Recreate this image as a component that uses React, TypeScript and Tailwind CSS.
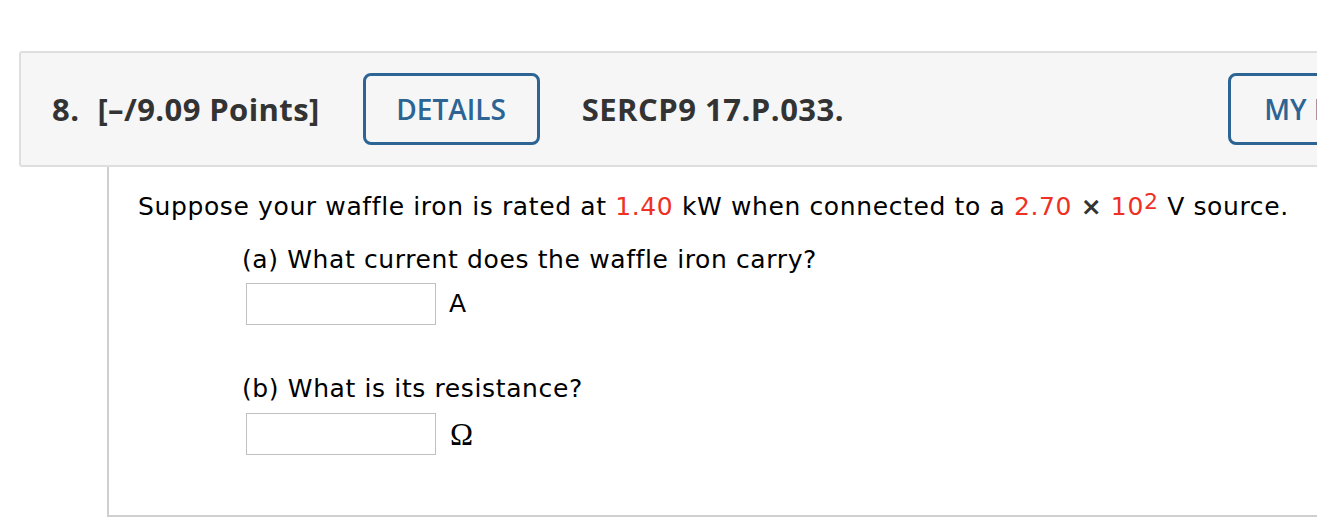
const ui = "font-['Open_Sans',sans-serif]";
const body = "font-['DejaVu_Sans','Verdana',sans-serif]";

function Red({ children }: { children: React.ReactNode }) {
  return <span className="text-[#ee3124]">{children}</span>;
}

export default function App() {
  return (
    <div className="h-[521px] w-[1317px] overflow-hidden bg-white pt-[51px] pl-[19px]">
      {/* question header */}
      <div
        className={`${ui} flex h-[116px] w-[1340px] items-center whitespace-nowrap rounded-[3px] border-2 border-[#dedede] bg-[#f6f6f6] pl-[31px] text-[#333]`}
      >
        <span className="shrink-0 text-[31px] font-bold tracking-[0.4px]">8.</span>
        <span className="ml-[18px] shrink-0 text-[31px] font-bold tracking-[0.4px]">[–/9.09 Points]</span>
        <button className="ml-[43px] h-[72px] w-[177px] shrink-0 rounded-[8px] border-[3px] border-[#2c6494] text-[28px] font-semibold text-[#2c6494]">
          DETAILS
        </button>
        <span className="ml-[42px] shrink-0 text-[31px] font-bold tracking-[0.5px]">SERCP9 17.P.033.</span>
        <button className="ml-[384px] h-[72px] w-[180px] shrink-0 rounded-[8px] border-[3px] border-[#2c6494] pl-[33px] text-left text-[28px] font-semibold text-[#2c6494]">
          MY NOTES
        </button>
      </div>

      {/* question body */}
      <div className={`${body} ml-[88px] h-[350px] w-[1300px] border-b-2 border-l-2 border-[#cfcfcf] pl-[29px] pt-[25px] text-[25px] tracking-[0.62px] text-black`}>
        <p className="whitespace-nowrap leading-[30px]">
          Suppose your waffle iron is rated at <Red>1.40</Red> kW when connected to a <Red>2.70</Red>{" "}
          <span className="font-bold text-[#333]">×</span>{" "}
          <Red>
            10<sup className="relative -top-[6px] text-[22px]">2</sup>
          </Red>{" "}
          V source.
        </p>
        <div className="ml-[104px] mt-[23px]">
          <p className="leading-[30px]">(a) What current does the waffle iron carry?</p>
          <div className="ml-[4px] mt-[8px] flex items-center">
            <input className="h-[42px] w-[190px] border border-[#c0c0c0] bg-white" />
            <span className="ml-[13px]">A</span>
          </div>
          <p className="mt-[49px] leading-[30px]">(b) What is its resistance?</p>
          <div className="ml-[4px] mt-[9px] flex items-center">
            <input className="h-[42px] w-[190px] border border-[#c0c0c0] bg-white" />
            <span className="ml-[14px] font-['Liberation_Serif',serif] text-[31px] leading-none">Ω</span>
          </div>
        </div>
      </div>
    </div>
  );
}
